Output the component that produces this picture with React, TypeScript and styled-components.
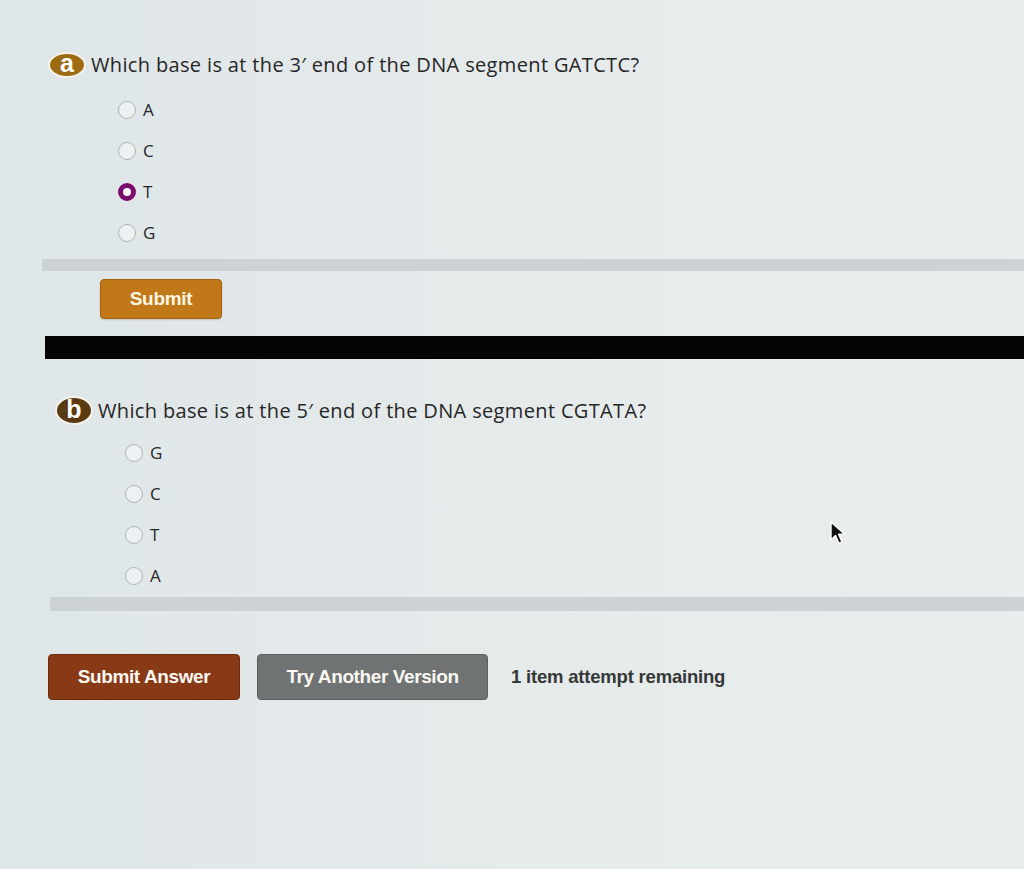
import styled, { createGlobalStyle } from 'styled-components'

const GlobalStyle = createGlobalStyle`
  html, body {
    margin: 0;
    padding: 0;
  }
  body {
    width: 1024px;
    height: 869px;
    overflow: hidden;
    background: linear-gradient(90deg, #dfe6e7 0%, #e5eaeb 45%, #e9eded 100%);
    font-family: "Open Sans", "DejaVu Sans", sans-serif;
    color: #2b2b2b;
  }
`

type Option = { label: string; checked?: boolean }

const partA: Option[] = [{ label: 'A' }, { label: 'C' }, { label: 'T', checked: true }, { label: 'G' }]
const partB: Option[] = [{ label: 'G' }, { label: 'C' }, { label: 'T' }, { label: 'A' }]

export default function App() {
  return (
    <Page>
      <GlobalStyle />
      <Header $top={51} $left={48}>
        <Badge $bg="#9c6b13" $h={26}>a</Badge>
        <Question>Which base is at the 3′ end of the DNA segment GATCTC?</Question>
      </Header>
      <OptionList $top={11} $left={118}>
        {partA.map((o) => (
          <OptionRow key={o.label}>
            <Radio $checked={o.checked} />
            <OptionLabel>{o.label}</OptionLabel>
          </OptionRow>
        ))}
      </OptionList>
      <Divider $top={6} $left={42} $h={12} />
      <SubmitButton>Submit</SubmitButton>
      <BlackBar />

      <Header $top={37} $left={55}>
        <Badge $bg="#5a3a12" $h={29}>b</Badge>
        <Question>Which base is at the 5′ end of the DNA segment CGTATA?</Question>
      </Header>
      <OptionList $top={7} $left={125}>
        {partB.map((o) => (
          <OptionRow key={o.label}>
            <Radio $checked={o.checked} />
            <OptionLabel>{o.label}</OptionLabel>
          </OptionRow>
        ))}
      </OptionList>
      <Divider $top={1} $left={50} $h={14} />

      <ActionRow>
        <ActionButton $bg="#883a16" $border="#6e2c0e" $w={192}>Submit Answer</ActionButton>
        <ActionButton $bg="#6f7373" $border="#5b5f5f" $w={231}>Try Another Version</ActionButton>
        <Attempts>1 item attempt remaining</Attempts>
      </ActionRow>

      <Cursor width="18" height="26" viewBox="0 0 18 26">
        <path
          d="M2 2 L2 20 L6.5 15.5 L10 23.5 L13 22 L9.6 14.3 L15.5 14 Z"
          fill="#111"
          stroke="#fff"
          strokeWidth="1.4"
          strokeLinejoin="round"
        />
      </Cursor>
    </Page>
  )
}

const Page = styled.div`
  position: relative;
  width: 1024px;
  height: 869px;
  display: flex;
  flex-direction: column;
  align-items: flex-start;
`

const Header = styled.div<{ $top: number; $left: number }>`
  display: flex;
  align-items: center;
  gap: 5px;
  margin-top: ${(p) => p.$top}px;
  margin-left: ${(p) => p.$left}px;
`

const Badge = styled.span<{ $bg: string; $h: number }>`
  display: flex;
  align-items: center;
  justify-content: center;
  width: 38px;
  height: ${(p) => p.$h}px;
  box-sizing: border-box;
  border-radius: 50%;
  border: 2px solid #f6f3ea;
  background: ${(p) => p.$bg};
  color: #ffffff;
  font-family: "Liberation Sans", Arial, sans-serif;
  font-weight: 700;
  font-size: 25px;
  line-height: 1;
  padding-bottom: 3px;
`

const Question = styled.span`
  font-size: 20px;
  color: #262626;
  letter-spacing: 0.35px;
`

const OptionList = styled.ul<{ $top: number; $left: number }>`
  list-style: none;
  margin: ${(p) => p.$top}px 0 0 ${(p) => p.$left}px;
  padding: 0;
  display: flex;
  flex-direction: column;
`

const OptionRow = styled.li`
  height: 41px;
  display: flex;
  align-items: center;
  gap: 7px;
`

const Radio = styled.span<{ $checked?: boolean }>`
  width: 18px;
  height: 18px;
  box-sizing: border-box;
  border-radius: 50%;
  border: ${(p) => (p.$checked ? '5px solid #7b0d6c' : '1.5px solid #aeb3b4')};
  background: ${(p) => (p.$checked ? '#ffffff' : '#eef1f1')};
`

const OptionLabel = styled.span`
  font-size: 17px;
  color: #262626;
`

const Divider = styled.div<{ $top: number; $left: number; $h: number }>`
  align-self: stretch;
  margin-top: ${(p) => p.$top}px;
  margin-left: ${(p) => p.$left}px;
  height: ${(p) => p.$h}px;
  background: #cdd3d4;
`

const SubmitButton = styled.button`
  margin-top: 8px;
  margin-left: 100px;
  width: 122px;
  height: 40px;
  border-radius: 4px;
  border: 1.5px solid #a8620f;
  background: #c17818;
  color: #fdf6e2;
  font-family: "Liberation Sans", Arial, sans-serif;
  font-weight: 700;
  font-size: 19px;
  letter-spacing: -0.3px;
  box-shadow: 0 1px 2px rgba(0, 0, 0, 0.15);
`

const BlackBar = styled.div`
  align-self: stretch;
  margin-top: 17px;
  margin-left: 45px;
  height: 23px;
  background: #050505;
`

const ActionRow = styled.div`
  display: flex;
  align-items: center;
  gap: 17px;
  margin-top: 43px;
  margin-left: 48px;
`

const ActionButton = styled.button<{ $bg: string; $border: string; $w: number }>`
  width: ${(p) => p.$w}px;
  height: 46px;
  border-radius: 4px;
  border: 1.5px solid ${(p) => p.$border};
  background: ${(p) => p.$bg};
  color: #fbf8f2;
  font-family: "Liberation Sans", Arial, sans-serif;
  font-weight: 700;
  font-size: 19px;
  letter-spacing: -0.4px;
`

const Attempts = styled.span`
  margin-left: 6px;
  font-family: "Liberation Sans", Arial, sans-serif;
  font-weight: 700;
  font-size: 18.5px;
  color: #363838;
  letter-spacing: -0.2px;
`

const Cursor = styled.svg`
  position: absolute;
  left: 829px;
  top: 520px;
`
